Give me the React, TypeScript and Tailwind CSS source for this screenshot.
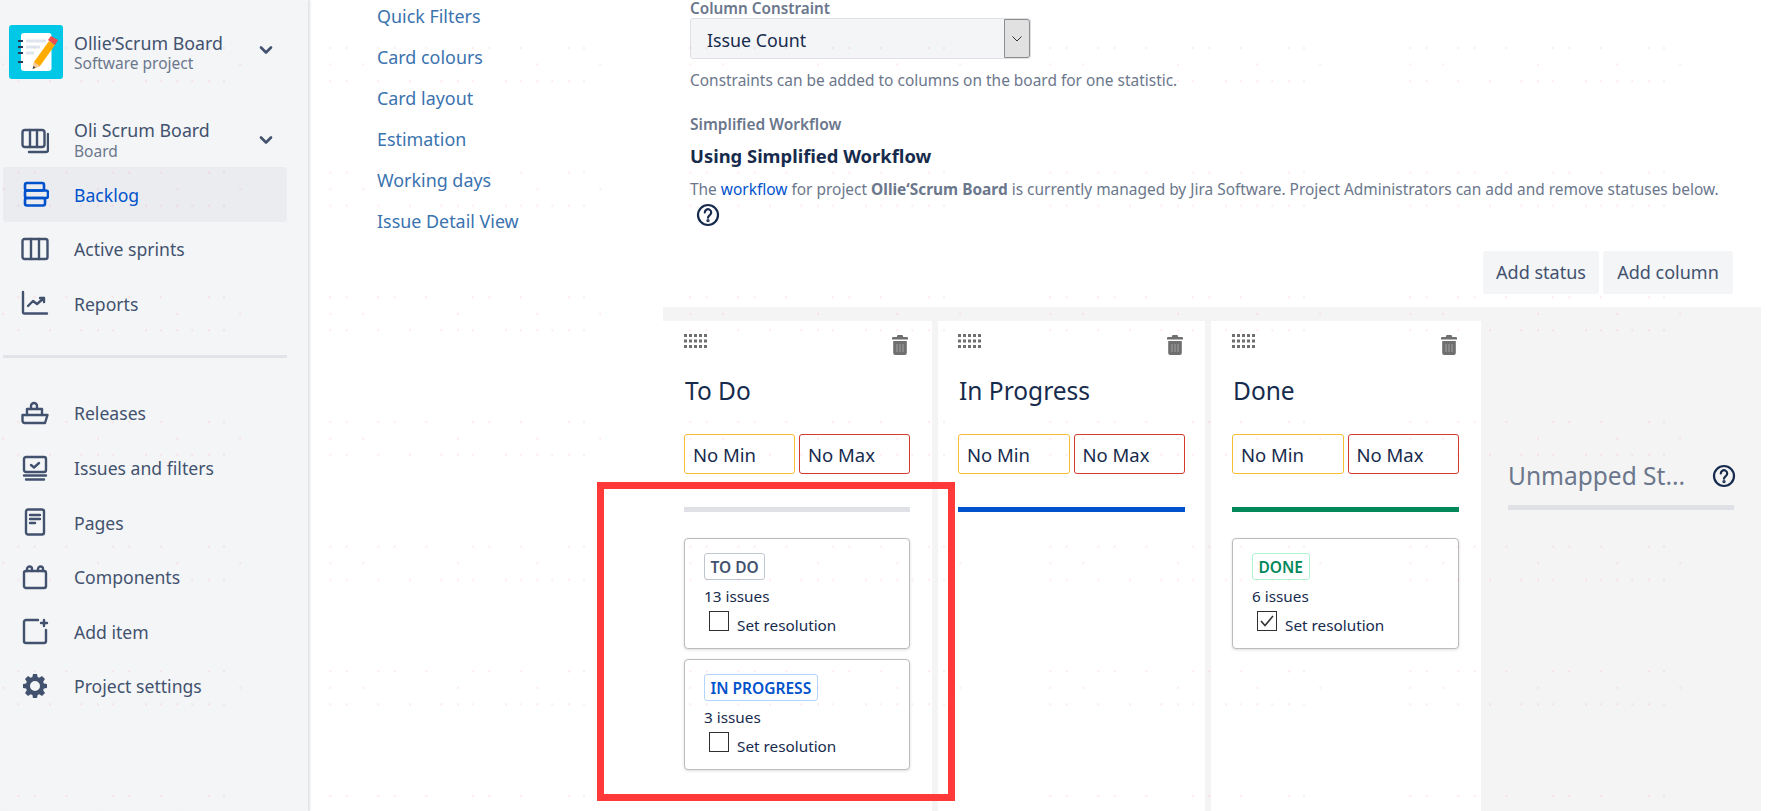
import React from "react";

const stroke = "#42526e";

function Svg({ children, w = 28, h = 28, color = stroke, sw = 2.2 }: { children: React.ReactNode; w?: number; h?: number; color?: string; sw?: number }) {
  return (
    <svg width={w} height={h} viewBox="0 0 28 28" fill="none" stroke={color} strokeWidth={sw} strokeLinecap="round" strokeLinejoin="round">
      {children}
    </svg>
  );
}

const BoardIcon = () => (
  <Svg sw={2.4}>
    <rect x="1.500" y="3" width="22" height="17" rx="2.500" />
    <path d="M9 3v17M16 3v17" />
    <path d="M27 7v16a2 2 0 0 1-2 2H8" />
  </Svg>
);
const BacklogIcon = () => (
  <Svg color="#0052cc" sw={2.6}>
    <rect x="4" y="3" width="19" height="7.500" rx="2" />
    <rect x="4" y="10.500" width="23" height="7.500" rx="2" />
    <rect x="4" y="18" width="20" height="7.500" rx="2" />
  </Svg>
);
const ColumnsIcon = () => (
  <Svg sw={2.4}>
    <rect x="1.500" y="4" width="25" height="20" rx="2" />
    <path d="M10 4v20M18 4v20" />
  </Svg>
);
const ReportsIcon = () => (
  <Svg sw={2.4}>
    <path d="M2 3v20a1.500 1.500 0 0 0 1.500 1.500H26" />
    <path d="M7 17l5-5 4 3 7-6M19 9h4v4" />
  </Svg>
);
const ReleasesIcon = () => (
  <Svg sw={2.4}>
    <path d="M1.500 16h25l-2.500 8H4a2.500 2.500 0 0 1-2.500-2.500z" />
    <path d="M6 16v-6h15v6" />
    <path d="M10 10V7a3 3 0 0 1 6 0v3" />
  </Svg>
);
const IssuesIcon = () => (
  <Svg sw={2.4}>
    <rect x="3" y="3" width="22" height="15" rx="2" />
    <path d="M10 11l3 2.500 5-4.500M3 21.500h22M5 25.500h18" />
  </Svg>
);
const PagesIcon = () => (
  <Svg sw={2.4}>
    <rect x="5" y="1.500" width="18" height="25" rx="2" />
    <path d="M9 7h10M9 11h10M9 15h5" />
  </Svg>
);
const ComponentsIcon = () => (
  <Svg sw={2.4}>
    <rect x="3" y="8" width="22" height="17" rx="2" />
    <path d="M6 8V6a2.500 2.500 0 0 1 5 0v2M17 8V6a2.500 2.500 0 0 1 5 0v2" />
  </Svg>
);
const AddIcon = () => (
  <Svg sw={2.4}>
    <path d="M17 3H5a2 2 0 0 0-2 2v19a2 2 0 0 0 2 2h18a2 2 0 0 0 2-2V13" />
    <path d="M23 3v6M20 6h6" />
  </Svg>
);
const GearIcon = () => (
  <svg width="24" height="24" viewBox="0 0 24 24" fill="none">
    <path
      fill={stroke}
      fillRule="evenodd"
      d="M10 1h4l.6 3.100 1.700.7L19 3l3 3-1.800 2.700.7 1.700L24 11v4l-3.100.6-.7 1.700L22 20l-3 3-2.700-1.800-1.700.7L14 25h-4l-.6-3.100-1.700-.7L5 23l-3-3 1.800-2.700-.7-1.700L0 15v-4l3.100-.6.7-1.700L2 6l3-3 2.700 1.800 1.700-.7zM12 8a5 5 0 1 0 0 10 5 5 0 0 0 0-10z"
      transform="translate(0 -1)"
    />
  </svg>
);
const Chevron = () => (
  <svg width="14" height="10" viewBox="0 0 14 10" fill="none" stroke={stroke} strokeWidth="2.600" strokeLinecap="round" strokeLinejoin="round">
    <path d="M2 2.500l5 5 5-5" />
  </svg>
);
const Help = () => (
  <svg width="24" height="24" viewBox="0 0 24 24" fill="none" stroke="#172b4d" strokeWidth="2.200" strokeLinecap="round">
    <circle cx="12" cy="12" r="10" />
    <path d="M8.800 9.400a3.200 3.200 0 1 1 5 2.700c-1.100.8-1.800 1.300-1.800 2.600" />
    <circle cx="12" cy="17.600" r=".6" fill="#172b4d" />
  </svg>
);
const Trash = () => (
  <svg width="16" height="20" viewBox="0 0 16 20">
    <path fill="#6f6f6f" d="M5.500 0h5l.7 2H15a1 1 0 0 1 1 1v1.500H0V3a1 1 0 0 1 1-1h3.800zM1.200 6h13.600v12a2 2 0 0 1-2 2H3.200a2 2 0 0 1-2-2z" />
    <path stroke="#a3a3a3" strokeWidth="1" d="M5 9v8M8 9v8M11 9v8" />
  </svg>
);
const Grip = () => (
  <svg width="24" height="14" viewBox="0 0 24 14" fill="#6f6f6f">
    {[0, 5.5, 11].map((y) => [0, 5, 10, 15, 20].map((x) => <rect key={`${x}-${y}`} x={x} y={y} width="3" height="3" />))}
  </svg>
);
const Logo = () => (
  <svg width="54" height="54" viewBox="0 0 54 54">
    <rect width="54" height="54" rx="3" fill="#00c7e6" />
    <rect x="12" y="8" width="30.500" height="38" rx="3" fill="#fff" />
    <path d="M17 16h20M17 22h14M17 28h8" stroke="#dfe5ee" strokeWidth="3" />
    <path d="M9 16h5M9 22h5M9 28h5M9 37h5" stroke="#253858" strokeWidth="2" />
    <path d="M25 37l15-21 6 4-15 21-7 3z" fill="#ffab00" />
    <path d="M39 15l3-4 7 4-3 5z" fill="#f04c4c" />
    <path d="M25 37l6 4-7 3z" fill="#f3c9a0" />
    <path d="M24.500 41l2 1.500-3 1.500z" fill="#253858" />
  </svg>
);

const dotRows: [number, number[]][] = [
  [48, [330.3, 346.7, 18.3, 34.7, 66.3, 112.7, 129.3, 160.7, 209, 224]],
  [64.5, [330.3, 3.3, 98, 177.3, 240.3]],
  [81, [330.3, 346.7, 18.3, 50, 81.3, 98, 112.7, 146, 160.7, 177.3, 192.3, 209, 224]],
];

function Dots() {
  return (
    <svg className="pointer-events-none absolute left-0 top-0" width="1767" height="811">
      <defs>
        <pattern id="dots" patternUnits="userSpaceOnUse" width="360" height="124.67">
          {dotRows.map(([y, xs]) => xs.map((x) => <rect key={`${y}-${x}`} x={x - 1} y={y - 1} width="2" height="2" fill="#ff0000" fillOpacity="0.08" />))}
        </pattern>
      </defs>
      <rect width="1767" height="811" fill="url(#dots)" />
    </svg>
  );
}

function NavRow({ icon, label, active }: { icon: React.ReactNode; label: string; active?: boolean }) {
  return (
    <div className={`ml-[3px] flex h-[54.6px] w-[284px] items-center rounded-[3px] ${active ? "bg-[#ebecf0]" : ""}`}>
      <div className="flex w-[64px] shrink-0 justify-center">{icon}</div>
      <span className={`ml-[7px] pt-[1px] text-[17.6px] ${active ? "text-[#0052cc]" : "text-[#42526e]"}`}>{label}</span>
    </div>
  );
}

const sideLinks = ["Quick Filters", "Card colours", "Card layout", "Estimation", "Working days", "Issue Detail View"];

function StatusCard({ tag, cls, issues, checked }: { tag: string; cls: string; issues: string; checked?: boolean }) {
  return (
    <div className="h-[111px] rounded-[4px] border border-[#bcbcbc] bg-white pl-[19px] pt-[14px] shadow-[0_1px_3px_rgba(9,30,66,0.15)]">
      <div className={`h-[27px] w-fit rounded-[3px] border px-[5.5px] text-[15.5px] font-semibold leading-[26px] ${cls}`}>{tag}</div>
      <div className="mt-[5.5px] text-[15.3px] leading-[20px] text-[#172b4d]">{issues}</div>
      <div className="ml-[5px] flex items-start">
        <div className="mt-[5.5px] flex h-[20px] w-[20px] items-center justify-center border border-[#2f2f2f]">
          {checked && (
            <svg width="16" height="14" viewBox="0 0 16 14" fill="none" stroke="#333" strokeWidth="1.600">
              <path d="M2 7l4 4.500L14 2" />
            </svg>
          )}
        </div>
        <span className="ml-[8px] mt-[9.5px] text-[15.3px] leading-[20px] text-[#172b4d]">Set resolution</span>
      </div>
    </div>
  );
}

function Column({ title, bar, className, children }: { title: string; bar: string; className: string; children?: React.ReactNode }) {
  return (
    <div className={`bg-white ${className}`}>
      <div className="flex h-[35px] items-start justify-between pt-[13px]">
        <Grip />
        <div className="mr-[2px] mt-[1px]"><Trash /></div>
      </div>
      <div className="ml-[1px] mt-[18px] text-[24.5px] leading-[34px] text-[#172b4d]">{title}</div>
      <div className="mt-[26px] flex gap-[4px]">
        <div className="flex h-[40px] flex-1 items-center rounded-[3px] border border-[#f9bd34] pl-[8px] pt-[1px] text-[18.5px] text-[#172b4d]">No Min</div>
        <div className="flex h-[40px] flex-1 items-center rounded-[3px] border border-[#d5392c] pl-[8px] pt-[1px] text-[18.5px] text-[#172b4d]">No Max</div>
      </div>
      <div className={`mt-[33px] h-[5px] ${bar}`} />
      <div className="mt-[26px] flex flex-col gap-[10px]">{children}</div>
    </div>
  );
}

export default function App() {
  return (
    <div className="relative flex h-[811px] w-[1767px] overflow-hidden bg-white font-['Noto_Sans',sans-serif]">
      <aside className="h-full w-[308px] shrink-0 bg-[#f4f5f7] shadow-[2px_0_2px_rgba(9,30,66,0.13)]">
        <div className="ml-[9px] mt-[25px] flex h-[54px] items-center">
          <Logo />
          <div className="ml-[11px] flex-1">
            <div className="text-[17.8px] leading-[22px] text-[#42526e]">Ollie‘Scrum Board</div>
            <div className="text-[15.5px] leading-[19px] text-[#6b778c]">Software project</div>
          </div>
          <div className="mb-[4px] mr-[35px]"><Chevron /></div>
        </div>
        <div className="ml-[3px] mt-[37px] flex h-[50px] w-[284px] items-center">
          <div className="flex w-[64px] shrink-0 justify-center"><BoardIcon /></div>
          <div className="mb-[4px] ml-[7px] flex-1">
            <div className="text-[17.8px] leading-[24px] text-[#42526e]">Oli Scrum Board</div>
            <div className="text-[15.5px] leading-[19px] text-[#6b778c]">Board</div>
          </div>
          <div className="mb-[2px] mr-[14px]"><Chevron /></div>
        </div>
        <div className="mt-[1px]">
          <NavRow icon={<BacklogIcon />} label="Backlog" active />
          <NavRow icon={<ColumnsIcon />} label="Active sprints" />
          <NavRow icon={<ReportsIcon />} label="Reports" />
        </div>
        <div className="ml-[3px] mt-[24px] h-[3px] w-[284px] bg-[#e1e3e9]" />
        <div className="mt-[28px]">
          <NavRow icon={<ReleasesIcon />} label="Releases" />
          <NavRow icon={<IssuesIcon />} label="Issues and filters" />
          <NavRow icon={<PagesIcon />} label="Pages" />
          <NavRow icon={<ComponentsIcon />} label="Components" />
          <NavRow icon={<AddIcon />} label="Add item" />
          <NavRow icon={<GearIcon />} label="Project settings" />
        </div>
      </aside>

      <nav className="w-[355px] shrink-0 pl-[69px] text-[17.9px] text-[#3b73af]">
        {sideLinks.map((l) => (
          <div key={l} className="flex h-[41px] items-center first:mt-[-4px]">{l}</div>
        ))}
      </nav>

      <main className="flex w-[1098px] shrink-0 flex-col">
        <div className="pl-[27px] pr-[28px]">
          <div className="mb-[1px] text-[15.3px] font-semibold leading-[17px] text-[#6b778c]">Column Constraint</div>
          <div className="flex h-[41px] w-[341px] items-center justify-between rounded-[3px] border border-[#dfe1e6] bg-[#f4f5f7]">
            <span className="pl-[16px] pt-[3px] text-[17.8px] text-[#172b4d]">Issue Count</span>
            <span className="mr-[0.5px] flex h-[39px] w-[26px] items-center justify-center rounded-r-[3px] border border-[#8d8d8d] bg-[#e1e1e1]">
              <svg width="10" height="6" viewBox="0 0 10 6" fill="none" stroke="#333" strokeWidth="1"><path d="M0.500 0.500L5 5l4.500-4.500" /></svg>
            </span>
          </div>
          <div className="mt-[11px] text-[15.45px] leading-[20px] text-[#6b778c]">Constraints can be added to columns on the board for one statistic.</div>
          <div className="mt-[24px] text-[15.5px] font-semibold leading-[20px] text-[#6b778c]">Simplified Workflow</div>
          <div className="mt-[10px] text-[18.4px] font-bold leading-[24px] text-[#172b4d]">Using Simplified Workflow</div>
          <div className="mt-[11px] text-[15.45px] leading-[20px] text-[#6b778c]">
            The <span className="text-[#0052cc]">workflow</span> for project <b className="font-bold">Ollie‘Scrum Board</b> is currently managed by Jira Software. Project Administrators can add and remove statuses below.
          </div>
          <div className="ml-[6px] mt-[4px] h-[24px]"><Help /></div>
          <div className="mt-[24px] flex justify-end gap-[4px]">
            <div className="flex h-[43px] w-[116px] items-center justify-center rounded-[3px] bg-[#f4f5f7] text-[18px] text-[#42526e]">Add status</div>
            <div className="flex h-[43px] w-[130px] items-center justify-center rounded-[3px] bg-[#f4f5f7] text-[18px] text-[#42526e]">Add column</div>
          </div>
        </div>
        <div className="mt-[13px] flex flex-1 items-stretch gap-[6px] bg-[#f4f4f4] pt-[14px]">
          <Column title="To Do" bar="bg-[#dfe1e6]" className="w-[269px] pl-[21px] pr-[22px]">
            <StatusCard tag="TO DO" cls="border-[#c1c7d0] text-[#42526e]" issues="13 issues" />
            <StatusCard tag="IN PROGRESS" cls="border-[#b3d4ff] text-[#0052cc]" issues="3 issues" />
          </Column>
          <Column title="In Progress" bar="bg-[#0052cc]" className="w-[267px] pl-[20px] pr-[20px]" />
          <Column title="Done" bar="bg-[#00875a]" className="w-[270px] pl-[21px] pr-[22px]">
            <StatusCard tag="DONE" cls="border-[#abf5d1] text-[#00875a]" issues="6 issues" checked />
          </Column>
          <div className="w-[250px] pl-[21px]">
            <div className="mt-[138px] flex w-[226px] items-center justify-between">
              <span className="text-[24.5px] leading-[34px] text-[#6b778c]">Unmapped St...</span>
              <span className="mr-[-2px]"><Help /></span>
            </div>
            <div className="mt-[12px] h-[5px] w-[226px] bg-[#dfe1e6]" />
          </div>
        </div>
      </main>

      <Dots />
      <div className="pointer-events-none absolute left-[597px] top-[482px] h-[319px] w-[358px] border-[7px] border-[#ff3838]" />
    </div>
  );
}
